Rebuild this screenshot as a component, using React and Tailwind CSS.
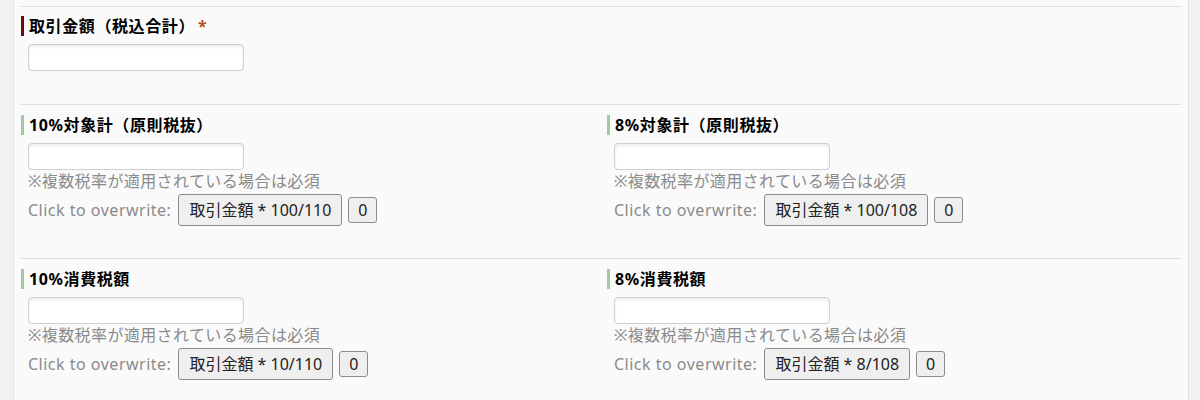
const fontStack = { fontFamily: '"Noto Sans", "Noto Sans CJK JP", sans-serif' }

function FieldTitle({ label, accent, required }) {
  return (
    <div className={`flex h-[20px] items-center border-l-[3px] pl-[5px] ${accent}`}>
      <span className="text-[16px] font-bold leading-[20px] tracking-[0.6px] text-black">{label}</span>
      {required ? <span className="ml-[3px] text-[16px] font-bold leading-[20px] text-[#b4501f]">*</span> : null}
    </div>
  )
}

function TextBox() {
  return (
    <input
      type="text"
      className="block h-[27px] w-[216px] rounded-[4px] border border-[#cfcfcf] bg-white shadow-[inset_0_2px_3px_rgba(0,0,0,0.08)] outline-none"
    />
  )
}

function TaxField({ label, formula }) {
  return (
    <div>
      <FieldTitle label={label} accent="border-[#a3c9a0]" />
      <div className="mt-[8px] pl-[7px]">
        <TextBox />
        <p className="text-[16px] leading-[22px] tracking-[0.4px] text-[#8a8a8a]">※複数税率が適用されている場合は必須</p>
        <div className="mt-[2px] flex h-[32px] items-center">
          <span className="text-[16px] tracking-[0.5px] text-[#8a8a8a]">Click to overwrite:</span>
          <button className="ml-[7px] h-[32px] rounded-[3px] border border-[#8c8c8c] bg-[#efefef] px-[10px] text-[16px] text-[#222]">
            取引金額 * {formula}
          </button>
          <button className="ml-[6px] h-[26px] w-[29px] rounded-[3px] border border-[#8c8c8c] bg-[#efefef] text-[16px] text-[#222]">
            0
          </button>
        </div>
      </div>
    </div>
  )
}

export default function App() {
  return (
    <div className="flex h-[400px] overflow-hidden bg-[#f2f2f2]" style={fontStack}>
      <div className="w-[14px] shrink-0 border-r border-[#e4e4e4]" />
      <main className="w-[1175px] shrink-0 border-r border-[#e4e4e4] bg-[#fafafa] px-[7px] pt-[6px]">
        <section className="border-t border-[#dddddd] pt-[9px] pb-[33px]">
          <FieldTitle label="取引金額（税込合計）" accent="border-[#6e0b0b]" required />
          <div className="mt-[8px] pl-[7px]">
            <TextBox />
          </div>
        </section>

        <section className="grid grid-cols-[586px_1fr] border-t border-[#dddddd] pt-[10px] pb-[32px]">
          <TaxField label="10%対象計（原則税抜）" formula="100/110" />
          <TaxField label="8%対象計（原則税抜）" formula="100/108" />
        </section>

        <section className="grid grid-cols-[586px_1fr] border-t border-[#dddddd] pt-[10px] pb-[32px]">
          <TaxField label="10%消費税額" formula="10/110" />
          <TaxField label="8%消費税額" formula="8/108" />
        </section>
      </main>
    </div>
  )
}
